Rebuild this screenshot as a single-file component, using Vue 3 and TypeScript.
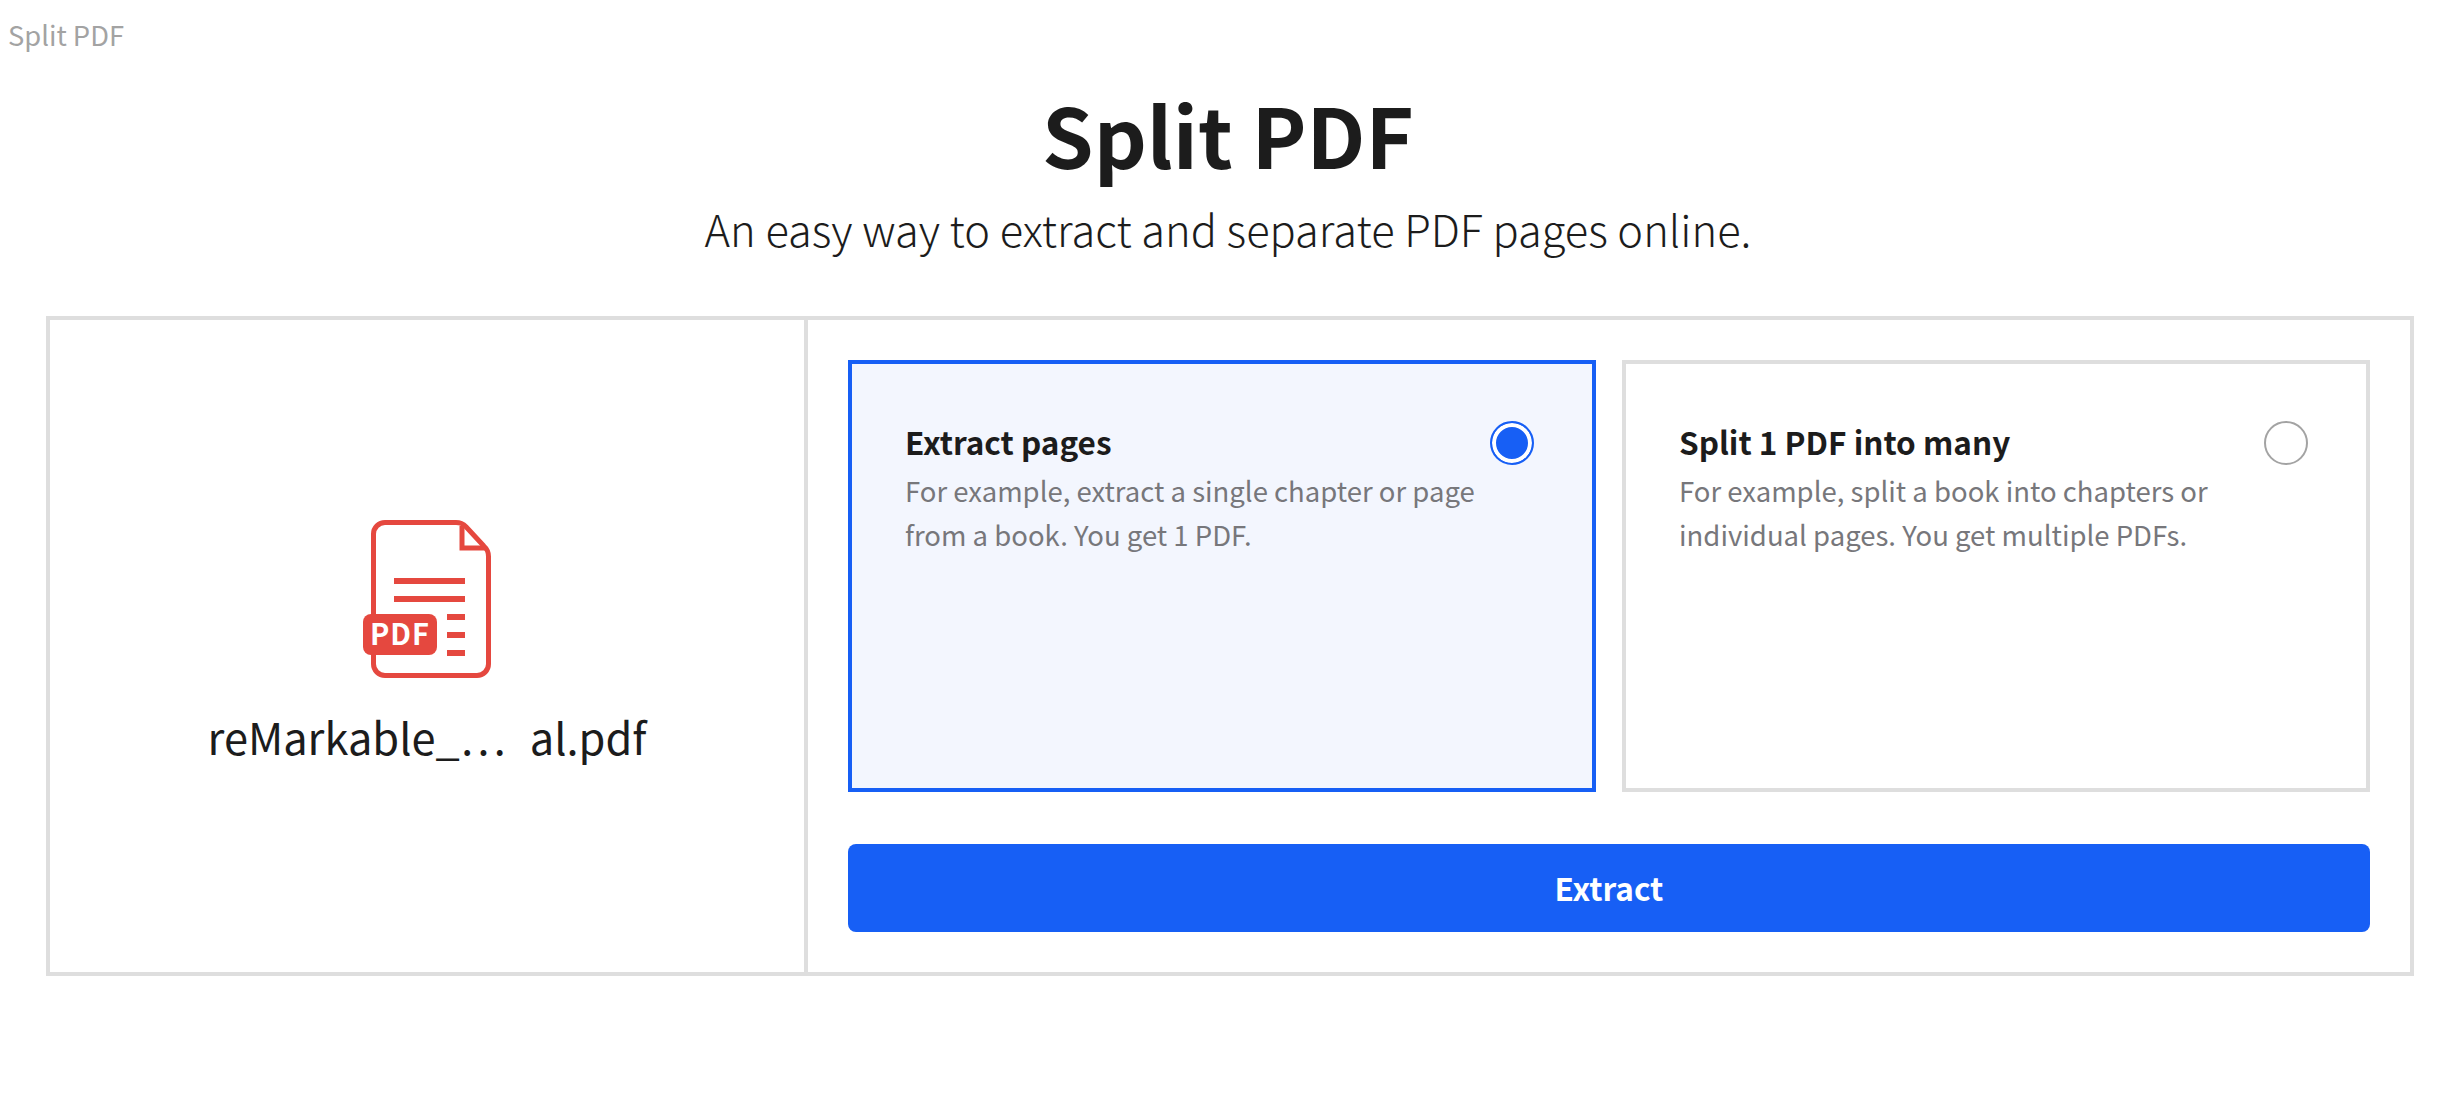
<script setup lang="ts">
interface Option { id: string; title: string; lines: string[]; selected: boolean }
const options: Option[] = [
  { id: 'extract', title: 'Extract pages', lines: ['For example, extract a single chapter or page', 'from a book. You get 1 PDF.'], selected: true },
  { id: 'split', title: 'Split 1 PDF into many', lines: ['For example, split a book into chapters or', 'individual pages. You get multiple PDFs.'], selected: false },
]
</script>

<template>
  <div class="page">
    <div class="crumb">Split PDF</div>
    <header class="head">
      <h1>Split PDF</h1>
      <p>An easy way to extract and separate PDF pages online.</p>
    </header>
    <main class="panel">
      <section class="file">
        <svg class="pdf" width="128" height="158" viewBox="0 0 128 158" fill="none">
          <path d="M22 2.500H93a14 14 0 0 1 10 4.200L120.800 26a14 14 0 0 1 4.700 10.500V144a11.500 11.500 0 0 1-11.500 11.500H22a11.500 11.500 0 0 1-11.500-11.500V14A11.500 11.500 0 0 1 22 2.500Z" stroke="#e5483f" stroke-width="5" />
          <path d="M99 6V28H123" stroke="#e5483f" stroke-width="5" />
          <path d="M31 61H102M31 79H102M84 97H102M84 115H102M84 133H102" stroke="#e5483f" stroke-width="6" />
          <rect x="0" y="94" width="74" height="41" rx="8" fill="#e5483f" />
          <text x="37" y="125" text-anchor="middle" class="pdf-label">PDF</text>
        </svg>
        <div class="name"><span>reMarkable_…</span><span>al.pdf</span></div>
      </section>
      <section class="work">
        <div class="cards">
          <article v-for="o in options" :key="o.id" class="card" :class="{ on: o.selected }">
            <div class="copy">
              <h2>{{ o.title }}</h2>
              <p v-for="l in o.lines" :key="l">{{ l }}</p>
            </div>
            <span class="radio" :class="{ on: o.selected }"></span>
          </article>
        </div>
        <button class="go">Extract</button>
      </section>
    </main>
  </div>
</template>

<style>
html, body { margin: 0; background: #fff; }
</style>

<style scoped>
.page {
  width: 2456px;
  height: 1102px;
  box-sizing: border-box;
  overflow: hidden;
  font-family: "Noto Sans CJK SC", "Noto Sans", sans-serif;
  color: #1c1c1c;
}
.crumb {
  height: 69px;
  padding: 14px 0 0 8px;
  box-sizing: border-box;
  font-size: 27.3px;
  line-height: 40px;
  color: #a3a3a3;
}
.head { text-align: center; height: 247px; }
.head h1 {
  margin: 0;
  font-size: 82.6px;
  line-height: 128px;
  font-weight: 700;
}
.head p {
  margin: 1px 0 0;
  font-size: 43.4px;
  line-height: 60px;
  font-weight: 200;
}
.panel {
  margin-left: 46px;
  width: 2368px;
  height: 660px;
  box-sizing: border-box;
  border: 4px solid #dedede;
  display: flex;
}
.file {
  width: 758px;
  flex: none;
  box-sizing: border-box;
  border-right: 4px solid #dedede;
  padding-bottom: 6px;
  display: flex;
  flex-direction: column;
  align-items: center;
  justify-content: center;
}
.pdf { display: block; }
.pdf-label {
  fill: #fff;
  font-family: "Noto Sans CJK SC", sans-serif;
  font-size: 29px;
  font-weight: 700;
  letter-spacing: 1px;
}
.name {
  margin-top: 28px;
  font-size: 43.4px;
  line-height: 60px;
  display: flex;
  gap: 24px;
}
.work {
  flex: 1;
  padding: 40px;
  display: flex;
  flex-direction: column;
  gap: 52px;
}
.cards { display: flex; gap: 26px; }
.card {
  flex: 1;
  height: 432px;
  box-sizing: border-box;
  border: 4px solid #dedede;
  padding: 55px 58px 0 53px;
  display: flex;
  justify-content: space-between;
  align-items: flex-start;
}
.card.on { border-color: #175ff5; background: #f3f6fe; }
.copy h2 {
  margin: 0 0 5px;
  font-size: 31.5px;
  line-height: 44px;
  font-weight: 700;
}
.copy p {
  margin: 0;
  font-size: 27.5px;
  line-height: 44px;
  color: #77777b;
  white-space: nowrap;
}
.radio {
  flex: none;
  width: 44px;
  height: 44px;
  box-sizing: border-box;
  border-radius: 50%;
  border: 2px solid #a3a3a3;
  margin-top: 2px;
  background: #fff;
}
.radio.on {
  border-color: #175ff5;
  background: #175ff5;
  box-shadow: inset 0 0 0 4px #fff;
}
.go {
  height: 88px;
  border: 0;
  border-radius: 8px;
  background: #175ff5;
  color: #fff;
  font-family: inherit;
  font-size: 31.5px;
  font-weight: 700;
  padding: 0 0 2px;
}
</style>
